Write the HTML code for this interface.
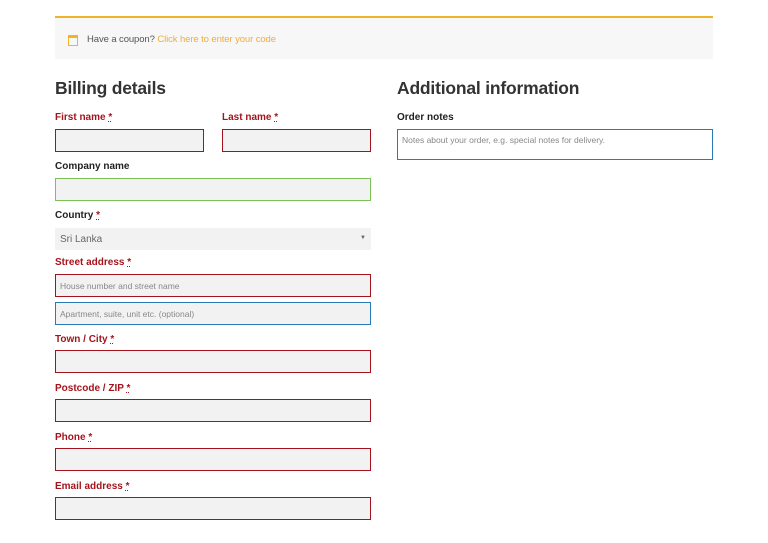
<!DOCTYPE html>
<html><head><style>
body{margin:0;background:#fff;font-family:"Liberation Sans",sans-serif;width:768px;height:543px;overflow:hidden;position:relative}
.a{position:absolute}
.coupon{left:55px;top:16px;width:658px;height:43px;background:#f7f7f7;border-top:2px solid #f0b429;box-sizing:border-box}
.coupon .ic{position:absolute;left:13px;top:17px;width:8px;height:7px;border:1px solid #f0b429;border-top-width:3px}
.coupon .t{position:absolute;left:32px;top:16px;font-size:9.5px;color:#555;letter-spacing:-0.1px}
.coupon .t span{color:#f0ad3e}
h2{position:absolute;margin:0;font-size:17.5px;font-weight:bold;color:#333;letter-spacing:-0.2px}
.l{position:absolute;font-size:10px;font-weight:bold;color:#a5141d}
.l u{text-decoration:underline dotted}
.k{color:#222}
.i{position:absolute;background:#f2f2f2;border:1px solid #a3121d;box-sizing:border-box;height:23px;font-size:8.5px;color:#888;padding:6px 0 0 4px}
</style></head><body>
<div class="a coupon"><div class="ic"></div><div class="t">Have a coupon? <span>Click here to enter your code</span></div></div>
<h2 style="left:55px;top:78px">Billing details</h2>
<h2 style="left:397px;top:78px">Additional information</h2>
<div class="l" style="left:55px;top:112px">First name <u>*</u></div>
<div class="l" style="left:222px;top:112px">Last name <u>*</u></div>
<div class="i" style="left:55px;top:129px;width:149px"></div>
<div class="i" style="left:222px;top:129px;width:149px"></div>
<div class="l k" style="left:55px;top:161px">Company name</div>
<div class="i" style="left:55px;top:178px;width:316px;border-color:#7cc25a"></div>
<div class="l k" style="left:55px;top:210px">Country <u style="color:#a5141d">*</u></div>
<div class="i" style="left:55px;top:228px;width:316px;height:22px;border-color:#f2f2f2;font-size:10px;color:#666;padding-top:5px">Sri Lanka<span style="position:absolute;right:4px;top:6px;font-size:6px">▼</span></div>
<div class="l" style="left:55px;top:257px">Street address <u>*</u></div>
<div class="i" style="left:55px;top:274px;width:316px">House number and street name</div>
<div class="i" style="left:55px;top:302px;width:316px;border-color:#2a7ab8">Apartment, suite, unit etc. (optional)</div>
<div class="l" style="left:55px;top:334px">Town / City <u>*</u></div>
<div class="i" style="left:55px;top:350px;width:316px"></div>
<div class="l" style="left:55px;top:383px">Postcode / ZIP <u>*</u></div>
<div class="i" style="left:55px;top:399px;width:316px"></div>
<div class="l" style="left:55px;top:432px">Phone <u>*</u></div>
<div class="i" style="left:55px;top:448px;width:316px"></div>
<div class="l" style="left:55px;top:481px">Email address <u>*</u></div>
<div class="i" style="left:55px;top:497px;width:316px"></div>
<div class="l k" style="left:397px;top:112px">Order notes</div>
<div class="i" style="left:397px;top:129px;width:316px;height:31px;background:#fff;border-color:#2a7ab8;padding-top:5px">Notes about your order, e.g. special notes for delivery.</div>
</body></html>
